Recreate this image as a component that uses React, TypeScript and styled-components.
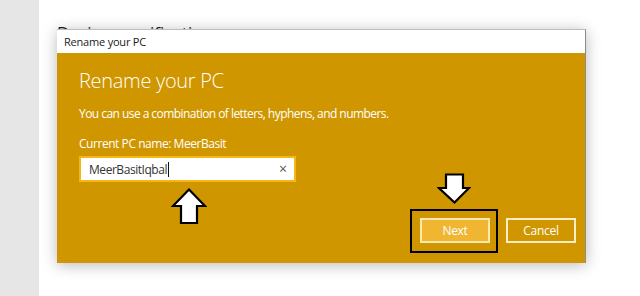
import styled, { createGlobalStyle } from "styled-components";

const GlobalStyle = createGlobalStyle`
  html, body {
    margin: 0;
    padding: 0;
    background: #ffffff;
  }
  body {
    font-family: "Open Sans", "Noto Sans", sans-serif;
  }
`;

export default function App() {
  return (
    <>
      <GlobalStyle />
      <Page>
        <SideStrip />
        <Main>
          <PageTitle>Device specifications</PageTitle>
        </Main>

        <Dialog>
          <TitleBar>Rename your PC</TitleBar>
          <Body>
            <Content>
              <Heading>Rename your PC</Heading>
              <Hint>You can use a combination of letters, hyphens, and numbers.</Hint>
              <Label>Current PC name: MeerBasit</Label>
              <InputBox>
                <InputText>
                  MeerBasitIqbal
                  <Caret />
                </InputText>
                <ClearGlyph>×</ClearGlyph>
              </InputBox>
              <UpArrow width="36" height="37" viewBox="0 0 36 37">
                <polygon
                  points="18,1.5 34,18 26,18 26,35 10,35 10,18 2,18"
                  fill="#fff"
                  stroke="#000"
                  strokeWidth="2.2"
                  strokeLinejoin="miter"
                />
              </UpArrow>
            </Content>

            <Footer>
              <NextGroup>
                <svg width="34" height="31" viewBox="0 0 34 31">
                  <polygon
                    points="9,1.5 26,1.5 26,15 32,15 17.5,29.5 2,15 9,15"
                    fill="#fff"
                    stroke="#000"
                    strokeWidth="2.2"
                  />
                </svg>
                <Highlight>
                  <Button $primary>Next</Button>
                </Highlight>
              </NextGroup>
              <CancelWrap>
                <Button>Cancel</Button>
              </CancelWrap>
            </Footer>
          </Body>
        </Dialog>
      </Page>
    </>
  );
}

const Page = styled.div`
  position: relative;
  width: 640px;
  height: 296px;
  display: flex;
  overflow: hidden;
  background: #fff;
`;

const SideStrip = styled.div`
  width: 39px;
  flex: none;
  background: #e6e6e6;
`;

const Main = styled.div`
  flex: 1;
  padding: 21px 0 0 18px;
`;

const PageTitle = styled.div`
  font-family: "Open Sans", sans-serif;
  font-size: 17px;
  color: #1a1a1a;
`;

const Dialog = styled.div`
  position: absolute;
  left: 57px;
  top: 29px;
  width: 529px;
  height: 234px;
  display: flex;
  flex-direction: column;
  box-sizing: border-box;
  border-top: 1px solid #bdbdbd;
  border-right: 1px solid #8c8c8c;
  box-shadow: 0 2px 14px rgba(0, 0, 0, 0.28);
  background: #d09600;
`;

const TitleBar = styled.div`
  height: 23px;
  flex: none;
  background: #fff;
  color: #1a1a1a;
  font-size: 11px;
  line-height: 23px;
  padding-left: 7px;
  letter-spacing: -0.2px;
`;

const Body = styled.div`
  flex: 1;
  display: grid;
  grid-template-columns: 1fr auto;
  padding: 0 9px 10px 22px;
  color: #fff;
`;

const Content = styled.div`
  display: flex;
  flex-direction: column;
  align-items: flex-start;
  padding-top: 14px;
`;

const Heading = styled.div`
  font-size: 20px;
  font-weight: 300;
  line-height: 27px;
  letter-spacing: -0.3px;
`;

const Hint = styled.div`
  margin-top: 12px;
  font-size: 12px;
  line-height: 16px;
  letter-spacing: -0.55px;
`;

const Label = styled.div`
  margin-top: 14px;
  font-size: 12px;
  line-height: 16px;
  letter-spacing: -0.45px;
`;

const InputBox = styled.div`
  margin-top: 4px;
  width: 217px;
  height: 26px;
  box-sizing: border-box;
  border: 2px solid #f6b613;
  background: #fff;
  display: flex;
  align-items: center;
  justify-content: space-between;
  padding: 0 7px 0 8px;
`;

const InputText = styled.span`
  display: flex;
  align-items: center;
  color: #333;
  font-size: 12px;
  letter-spacing: -0.45px;
`;

const Caret = styled.span`
  display: inline-block;
  width: 1px;
  height: 15px;
  background: #111;
  margin-left: 1px;
`;

const ClearGlyph = styled.span`
  color: #555;
  font-size: 14px;
  line-height: 1;
`;

const UpArrow = styled.svg`
  margin: 6px 0 0 92px;
`;

const Footer = styled.div`
  align-self: end;
  display: flex;
  align-items: flex-end;
  gap: 8px;
`;

const NextGroup = styled.div`
  display: flex;
  flex-direction: column;
  align-items: center;
  gap: 5px;
`;

const Highlight = styled.div`
  border: 2px solid #000;
  padding: 7px 6px 8px 8px;
`;

const CancelWrap = styled.div`
  padding-bottom: 10px;
`;

const Button = styled.div<{ $primary?: boolean }>`
  width: 70px;
  height: 25px;
  box-sizing: border-box;
  display: flex;
  align-items: center;
  justify-content: center;
  border: 2px solid ${(p) => (p.$primary ? "#fbe7b0" : "#fbecc8")};
  background: ${(p) => (p.$primary ? "#f0b632" : "transparent")};
  color: #fff;
  font-size: 12px;
  letter-spacing: -0.3px;
`;
